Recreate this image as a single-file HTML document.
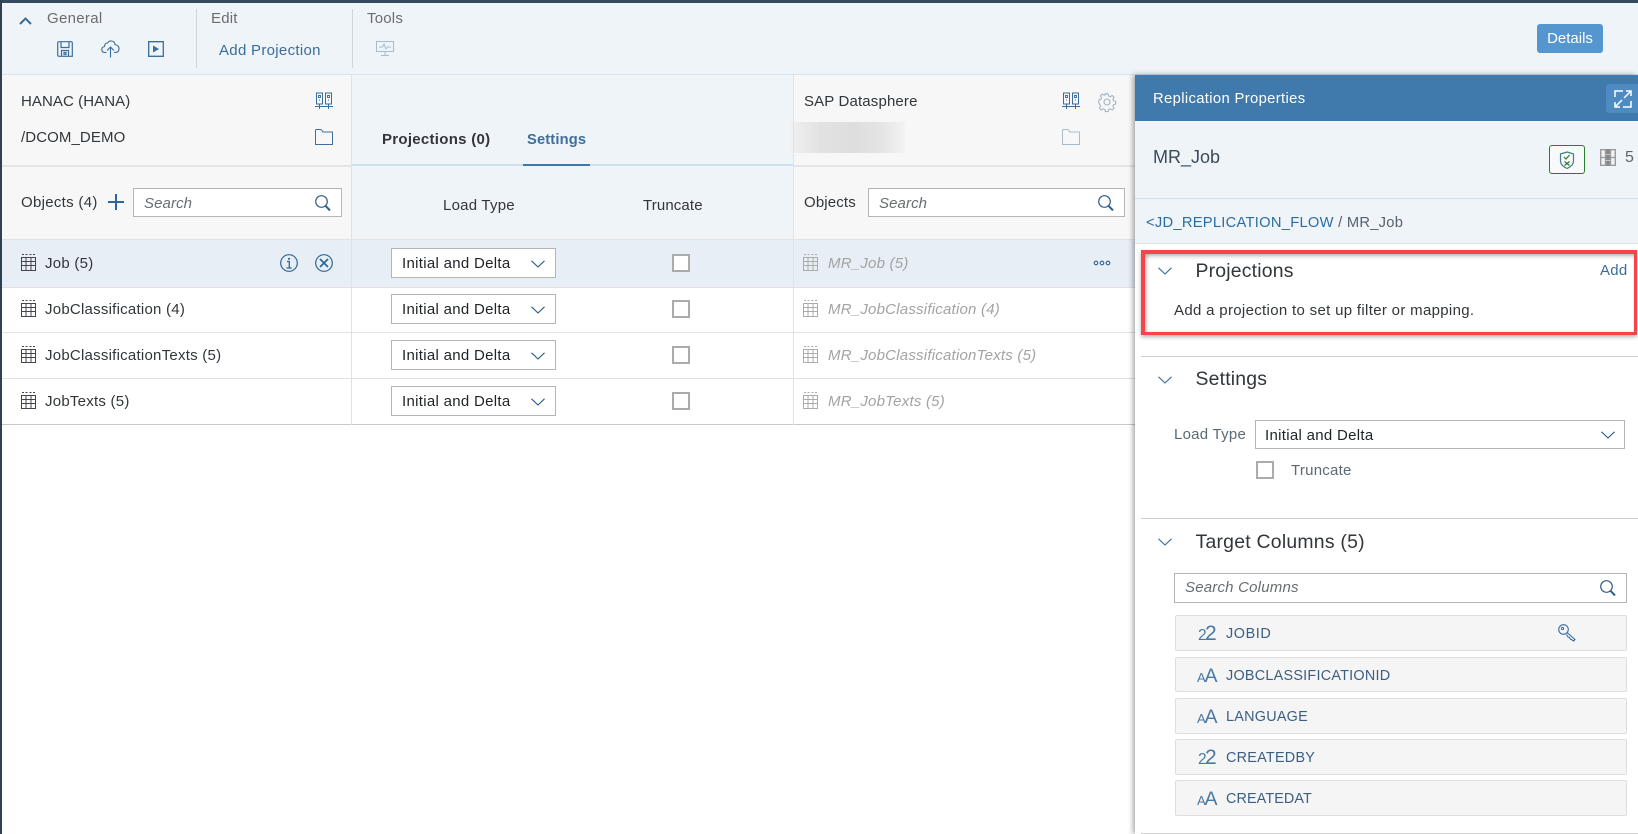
<!DOCTYPE html>
<html><head><meta charset="utf-8"><title>Replication Flow</title>
<style>
html,body{margin:0;padding:0;background:#fff}
#p{position:relative;width:1638px;height:834px;overflow:hidden;background:#fff;font-family:"Liberation Sans",sans-serif;font-size:15px;color:#32363a}
#p div,#p svg,#p span.t{position:absolute}
.t{white-space:nowrap;line-height:20px;height:20px;letter-spacing:.2px}
.b{border:1px solid #b5b5b5;background:#fff;box-sizing:border-box}
.cb{border:2px solid #ababab;background:#fff;box-sizing:border-box;width:18px;height:18px}
.hl{height:1px;background:#e2e2e2}
.g{color:#a3a3a3;font-style:italic;letter-spacing:.22px}
.ph{color:#6a6d70;font-style:italic;letter-spacing:.1px}
.li{left:1175px;width:452px;background:#f5f5f5;border:1px solid #dedede;border-radius:2px;box-sizing:border-box}
.lt{color:#3b5f83;font-size:14.4px;letter-spacing:.25px}
.h2{font-size:19.4px;color:#32363a;letter-spacing:.2px}
.sel{color:#1f2328;letter-spacing:.3px}
.ty{color:#4a78a2;line-height:26px;height:26px;letter-spacing:0}
svg{overflow:visible;fill:none}
</style></head><body><div id="p">
<svg width="0" height="0" style="position:absolute">
<defs>
<symbol id="tbl" viewBox="0 0 15 18"><path d="M.5 4.500h14v13H.5zM.5 8.500h14M.5 12.500h14M5 4.500v13M10 4.500v13M1 1.500h2M4.500 1.500h2M8.500 1.500h2M12 1.500h2" stroke="currentColor" fill="none"/></symbol>
<symbol id="conn" viewBox="0 0 18 18"><path d="M1.500 1h6v11h-6zM10.500 1h6v11h-6zM4.500 12v5M13.500 12v5M0 14.500h18" stroke="currentColor" fill="none"/><path d="M3.500 3.500h2v2h-2zM12.500 3.500h2v2h-2zM4 8h1M13 8h1" stroke="currentColor" fill="none" stroke-width=".9"/></symbol>
<symbol id="fold" viewBox="0 0 18 16"><path d="M.5 15.500V1.500q0-1 1-1h4q1 0 1.500 1l.7 1.500h9.800v12.500z" stroke="currentColor" fill="none"/></symbol>
<symbol id="srch" viewBox="0 0 16 16"><circle cx="6.500" cy="6.500" r="5.800" stroke="currentColor" fill="none" stroke-width="1.200"/><path d="M10.500 10.800l4.500 4.700" stroke="currentColor" stroke-width="2" fill="none"/></symbol>
<symbol id="chev" viewBox="0 0 14 8"><path d="M.5.800L7 7l6.500-6.200" stroke="currentColor" fill="none" stroke-width="1.100"/></symbol>
</defs></svg>

<!-- frame -->
<div style="left:0;top:0;width:1638px;height:3px;background:#354a5f"></div>
<div style="left:0;top:0;width:2px;height:834px;background:#2f4052"></div>

<!-- toolbar -->
<div style="left:2px;top:3px;width:1636px;height:71px;background:#eff4f9"></div>
<div style="left:2px;top:74px;width:1636px;height:1px;background:#d6e3f0"></div>
<svg style="left:19px;top:17px" width="13" height="8" viewBox="0 0 13 8"><path d="M1 7L6.500 1.500 12 7" stroke="#3b6c97" stroke-width="2"/></svg>
<span class="t" style="left:47px;top:9px;color:#6a6d70;letter-spacing:.3px">General</span>
<svg style="left:57px;top:41px" width="16" height="16" viewBox="0 0 16 16"><path d="M.7 2q0-1.300 1.300-1.300h12q1.300 0 1.300 1.300v13.300H2q-1.300 0-1.300-1.300zM4 1v5.500h8V1M4.500 15v-5.500h7V15M7 11.500h2v2H7z" stroke="#3a6d9b" stroke-width="1.200"/></svg>
<svg style="left:101px;top:40px" width="19" height="18" viewBox="0 0 19 18"><path d="M5.500 12.500H4Q.8 12.500.8 9.500 .8 7 3.500 6.500 3.800 3 6.500 3 8 .8 10.500 1 13.500 1.300 14 4.500 18.300 5.500 18 9.200 17.800 12.500 14 12.500h-1M9.500 17.500V7M6 10.500L9.500 7l3.500 3.500" stroke="#3a6d9b" stroke-width="1.100"/></svg>
<svg style="left:148px;top:41px" width="16" height="16" viewBox="0 0 16 16"><path d="M.7.700h14.600v14.600H.7z" stroke="#3a6d9b" stroke-width="1.300"/><path d="M5 4.500L11 8l-6 3.500z" fill="#3a6d9b"/></svg>
<div style="left:196px;top:9px;width:1px;height:59px;background:#cdd5dc"></div>
<span class="t" style="left:211px;top:9px;color:#6a6d70">Edit</span>
<span class="t" style="left:219px;top:41px;color:#3a6d9b;letter-spacing:.3px">Add Projection</span>
<div style="left:352px;top:9px;width:1px;height:59px;background:#cdd5dc"></div>
<span class="t" style="left:367px;top:9px;color:#6a6d70">Tools</span>
<svg style="left:376px;top:41px" width="18" height="15" viewBox="0 0 18 15"><path d="M.5.500h17v10H.5zM5 14.500h8M9 11v3" stroke="#a9bccd"/><path d="M3 6h3.500l1.500-3 2 5 1.500-2H15" stroke="#a9bccd"/></svg>
<div style="left:1537px;top:24px;width:66px;height:29px;background:#5496cd;border-radius:3px;color:#fff;text-align:center;line-height:30px">Details</div>

<!-- left col -->
<div style="left:2px;top:75px;width:349px;height:164px;background:#f7f7f7"></div>
<div style="left:2px;top:165px;width:349px;height:2px;background:#e5e5e5"></div>
<span class="t" style="left:21px;top:92px;letter-spacing:.08px">HANAC (HANA)</span>
<svg style="left:315px;top:92px;color:#3a6d9b" width="18" height="18"><use href="#conn"/></svg>
<span class="t" style="left:21px;top:128px;letter-spacing:.1px">/DCOM_DEMO</span>
<svg style="left:315px;top:129px;color:#3f6e98" width="18" height="16"><use href="#fold"/></svg>
<span class="t" style="left:21px;top:193px;letter-spacing:.3px">Objects (4)</span>
<div style="left:108px;top:201px;width:16px;height:2px;background:#2f6698"></div>
<div style="left:115px;top:194px;width:2px;height:16px;background:#2f6698"></div>
<div class="b" style="left:133px;top:188px;width:209px;height:29px"></div>
<span class="t ph" style="left:144px;top:194px">Search</span>
<svg style="left:315px;top:195px;color:#2f5f8c" width="16" height="16"><use href="#srch"/></svg>

<!-- middle head -->
<div style="left:352px;top:75px;width:441px;height:164px;background:#eff4f9"></div>
<div style="left:352px;top:164px;width:441px;height:2px;background:#d1e0ee"></div>
<div style="left:523px;top:164px;width:67px;height:2px;background:#3f78aa"></div>
<span class="t" style="left:382px;top:130px;font-weight:bold;font-size:15px;letter-spacing:.28px">Projections (0)</span>
<span class="t" style="left:527px;top:130px;font-weight:bold;font-size:14.700px;color:#3f6f9d;letter-spacing:.15px">Settings</span>
<span class="t" style="left:443px;top:196px;letter-spacing:.23px">Load Type</span>
<span class="t" style="left:643px;top:196px;letter-spacing:.13px">Truncate</span>

<!-- right col head -->
<div style="left:793px;top:75px;width:342px;height:164px;background:#f7f7f7"></div>
<div style="left:793px;top:165px;width:342px;height:2px;background:#e5e5e5"></div>
<span class="t" style="left:804px;top:92px;letter-spacing:.15px">SAP Datasphere</span>
<svg style="left:1062px;top:92px;color:#3a6d9b" width="18" height="18"><use href="#conn"/></svg>
<svg style="left:1098px;top:93px" width="18" height="18" viewBox="0 0 18 18"><path d="M7.500 1h3l.5 2.300 1.800.8 2-1.300 2 2-1.300 2 .8 1.800 2.200.4v3l-2.200.5-.8 1.800 1.300 2-2 2-2-1.300-1.800.8-.5 2.200h-3l-.5-2.200-1.800-.8-2 1.300-2-2 1.300-2-.8-1.800L.5 10.500v-3l2.200-.4.800-1.800-1.300-2 2-2 2 1.300 1.800-.8z" transform="scale(.94) translate(.3 -.2)" stroke="#9fb2c4" stroke-width="1.100"/><circle cx="9" cy="9" r="3" stroke="#9fb2c4" stroke-width="1.100"/></svg>
<div style="left:791px;top:122px;width:114px;height:31px;background:linear-gradient(90deg,#f0f0f0 0%,#e2e2e2 25%,#dedede 55%,#e4e4e4 78%,#f3f3f3 100%)"></div>
<svg style="left:1062px;top:129px;color:#a9bccd" width="18" height="16"><use href="#fold"/></svg>
<span class="t" style="left:804px;top:193px;letter-spacing:.15px">Objects</span>
<div class="b" style="left:868px;top:188px;width:257px;height:29px"></div>
<span class="t ph" style="left:879px;top:194px">Search</span>
<svg style="left:1098px;top:195px;color:#2f5f8c" width="16" height="16"><use href="#srch"/></svg>

<!-- rows -->
<div style="left:2px;top:239px;width:1133px;height:48px;background:#e7eef6"></div>
<div class="hl" style="left:2px;top:239px;width:1133px"></div>
<div class="hl" style="left:2px;top:287px;width:1133px"></div>
<div class="hl" style="left:2px;top:332px;width:1133px"></div>
<div class="hl" style="left:2px;top:378px;width:1133px"></div>
<div style="left:2px;top:424px;width:1133px;height:1px;background:#c8c8c8"></div>
<div style="left:351px;top:75px;width:1px;height:350px;background:#e2e2e2"></div>
<div style="left:793px;top:75px;width:1px;height:350px;background:#e2e2e2"></div>

<!-- row 1 -->
<svg style="left:21px;top:253px;color:#45434d" width="15" height="18"><use href="#tbl"/></svg>
<span class="t" style="left:45px;top:254px;letter-spacing:.25px">Job (5)</span>
<svg style="left:280px;top:254px" width="18" height="18" viewBox="0 0 18 18"><circle cx="9" cy="9" r="8.300" stroke="#2f6698" stroke-width="1.200"/><path d="M7 7.500h2.300V14M6.500 14h5.200" stroke="#2f6698" stroke-width="1.300"/><circle cx="9" cy="4.800" r="1.100" fill="#2f6698"/></svg>
<svg style="left:315px;top:254px" width="18" height="18" viewBox="0 0 18 18"><circle cx="9" cy="9" r="8.300" stroke="#2f6698" stroke-width="1.200"/><path d="M5 5l8 8M13 5l-8 8" stroke="#2f6698" stroke-width="1.700"/></svg>
<div class="b" style="left:391px;top:248px;width:165px;height:30px"></div>
<span class="t sel" style="left:402px;top:254px">Initial and Delta</span>
<svg style="left:531px;top:260px;color:#2c5c88" width="14" height="8"><use href="#chev"/></svg>
<div class="cb" style="left:672px;top:254px"></div>
<svg style="left:803px;top:253px;color:#ababab" width="15" height="18"><use href="#tbl"/></svg>
<span class="t g" style="left:828px;top:254px">MR_Job (5)</span>
<svg style="left:1093px;top:260px" width="18" height="6" viewBox="0 0 18 6"><g stroke="#2f5f8c" stroke-width="1.100"><circle cx="3" cy="3" r="1.800"/><circle cx="9" cy="3" r="1.800"/><circle cx="15" cy="3" r="1.800"/></g></svg>

<!-- row 2 -->
<svg style="left:21px;top:299px;color:#45434d" width="15" height="18"><use href="#tbl"/></svg>
<span class="t" style="left:45px;top:300px;letter-spacing:.24px">JobClassification (4)</span>
<div class="b" style="left:391px;top:294px;width:165px;height:30px"></div>
<span class="t sel" style="left:402px;top:300px">Initial and Delta</span>
<svg style="left:531px;top:306px;color:#2c5c88" width="14" height="8"><use href="#chev"/></svg>
<div class="cb" style="left:672px;top:300px"></div>
<svg style="left:803px;top:299px;color:#ababab" width="15" height="18"><use href="#tbl"/></svg>
<span class="t g" style="left:828px;top:300px">MR_JobClassification (4)</span>

<!-- row 3 -->
<svg style="left:21px;top:345px;color:#45434d" width="15" height="18"><use href="#tbl"/></svg>
<span class="t" style="left:45px;top:346px;letter-spacing:.24px">JobClassificationTexts (5)</span>
<div class="b" style="left:391px;top:340px;width:165px;height:30px"></div>
<span class="t sel" style="left:402px;top:346px">Initial and Delta</span>
<svg style="left:531px;top:352px;color:#2c5c88" width="14" height="8"><use href="#chev"/></svg>
<div class="cb" style="left:672px;top:346px"></div>
<svg style="left:803px;top:345px;color:#ababab" width="15" height="18"><use href="#tbl"/></svg>
<span class="t g" style="left:828px;top:346px">MR_JobClassificationTexts (5)</span>

<!-- row 4 -->
<svg style="left:21px;top:391px;color:#45434d" width="15" height="18"><use href="#tbl"/></svg>
<span class="t" style="left:45px;top:392px;letter-spacing:.24px">JobTexts (5)</span>
<div class="b" style="left:391px;top:386px;width:165px;height:30px"></div>
<span class="t sel" style="left:402px;top:392px">Initial and Delta</span>
<svg style="left:531px;top:398px;color:#2c5c88" width="14" height="8"><use href="#chev"/></svg>
<div class="cb" style="left:672px;top:392px"></div>
<svg style="left:803px;top:391px;color:#ababab" width="15" height="18"><use href="#tbl"/></svg>
<span class="t g" style="left:828px;top:392px">MR_JobTexts (5)</span>

<!-- right panel -->
<div style="left:1135px;top:75px;width:503px;height:759px;background:#fff;box-shadow:-2px 0 5px rgba(0,0,0,.35)"></div>
<div style="left:1135px;top:75px;width:503px;height:46px;background:#4079ab"></div>
<span class="t" style="left:1153px;top:89px;color:#fff;font-size:14.800px;letter-spacing:.35px">Replication Properties</span>
<div style="left:1606px;top:84px;width:32px;height:29px;background:#4d8bc2;border-radius:3px 0 0 3px"></div>
<svg style="left:1614px;top:90px" width="18" height="18" viewBox="0 0 18 18"><path d="M1 7V1h8M17 11v6H9M10 8l7-7M12 1h5v5M8 10l-7 7M1 12v5h5" stroke="#fff" stroke-width="1.500"/></svg>
<div style="left:1135px;top:121px;width:503px;height:122px;background:#eff4f9"></div>
<div style="left:1135px;top:198px;width:503px;height:1px;background:#d1e0ee"></div>
<div style="left:1135px;top:243px;width:503px;height:1px;background:#d8e3ee"></div>
<span class="t" style="left:1153px;top:147px;font-size:18px;color:#3c4b5a;letter-spacing:0">MR_Job</span>
<div style="left:1549px;top:145px;width:36px;height:29px;border:1px solid #2b7c2b;border-radius:3px;box-sizing:border-box;background:#f7f9fb"></div>
<svg style="left:1559px;top:151px" width="16" height="18" viewBox="0 0 16 18"><path d="M8 1L14.500 3v7q0 4.500-6.500 7.500Q1.500 14.500 1.500 10V3z" stroke="#3f7f90" stroke-width="1.200"/><path d="M5 6l2 2 3.500-4M5.500 10.500l5 4M10.500 10.500l-5 4" stroke="#2b7c2b" stroke-width="1.200"/></svg>
<svg style="left:1600px;top:149px" width="16" height="17" viewBox="0 0 16 17"><path d="M5.500 0h5v17h-5z" fill="#8a8a8a"/><path d="M.7.700h4.800v15.600H.7zM10.500.7h4.800v15.600h-4.800z" stroke="#9a9a9a" stroke-width="1.400"/><path d="M0 8.500h5.500M10.500 8.500H16" stroke="#9a9a9a" stroke-width="1.300"/><path d="M5.500 5.500h5M5.500 11.500h5" stroke="#d5d9de" stroke-width=".8"/></svg>
<span class="t" style="left:1625px;top:148px;font-size:16px;color:#5d6670;letter-spacing:0">5</span>
<span class="t" style="left:1146px;top:213px;font-size:14.700px;color:#2b6da3;letter-spacing:.28px">&lt;JD_REPLICATION_FLOW <span style="color:#56626e">/ MR_Job</span></span>

<!-- projections -->
<div style="left:1141px;top:250px;width:496px;height:85px;box-sizing:border-box;border:solid #f5444a;border-width:4px 3px 3px 4px;box-shadow:0 2px 4px rgba(0,0,0,.3),inset 0 4px 4px -2px rgba(0,0,0,.28),inset 3px 0 3px -1px rgba(0,0,0,.2)"></div>
<svg style="left:1158px;top:267px;color:#3a6d9b" width="14" height="8"><use href="#chev"/></svg>
<span class="t h2" style="left:1195.500px;top:261px">Projections</span>
<span class="t" style="left:1600px;top:261px;color:#3a6d9b;letter-spacing:.25px">Add</span>
<span class="t" style="left:1174px;top:301px;letter-spacing:.32px">Add a projection to set up filter or mapping.</span>

<!-- settings -->
<div style="left:1141px;top:356px;width:497px;height:1px;background:#cfcfcf"></div>
<svg style="left:1158px;top:376px;color:#3a6d9b" width="14" height="8"><use href="#chev"/></svg>
<span class="t h2" style="left:1195.500px;top:369px">Settings</span>
<span class="t" style="left:1174px;top:425px;color:#5a6a75;letter-spacing:.25px">Load Type</span>
<div class="b" style="left:1255px;top:420px;width:370px;height:29px"></div>
<span class="t sel" style="left:1265px;top:426px">Initial and Delta</span>
<svg style="left:1601px;top:431px;color:#2c5c88" width="14" height="8"><use href="#chev"/></svg>
<div class="cb" style="left:1256px;top:461px"></div>
<span class="t" style="left:1291px;top:461px;color:#5a6a75;letter-spacing:.25px">Truncate</span>

<!-- target columns -->
<div style="left:1141px;top:518px;width:497px;height:1px;background:#cfcfcf"></div>
<svg style="left:1158px;top:538px;color:#3a6d9b" width="14" height="8"><use href="#chev"/></svg>
<span class="t h2" style="left:1195.500px;top:532px;letter-spacing:.25px">Target Columns (5)</span>
<div class="b" style="left:1174px;top:573px;width:453px;height:30px"></div>
<span class="t ph" style="left:1185px;top:578px;letter-spacing:.2px">Search Columns</span>
<svg style="left:1600px;top:580px;color:#2f5f8c" width="16" height="16"><use href="#srch"/></svg>

<div class="li" style="top:615px;height:36px"></div>
<span class="t ty" style="left:1198px;top:623px;font-size:15.500px">2</span><span class="t ty" style="left:1205px;top:621px;font-size:21px">2</span>
<span class="t lt" style="left:1226px;top:624px;letter-spacing:.6px">JOBID</span>
<svg style="left:1558px;top:624px" width="19" height="18" viewBox="0 0 19 18"><circle cx="5.500" cy="5.500" r="4.800" stroke="#3a6d9b" stroke-width="1.100"/><circle cx="4.500" cy="4.500" r="1.100" stroke="#3a6d9b"/><path d="M9 8.500l8 7-1.500 1.500-2-1.500-1-.1-1-1.900-1.500-.5-1.500-2.500" stroke="#3a6d9b" stroke-width="1.100"/></svg>

<div class="li" style="top:657px;height:35px"></div>
<span class="t ty" style="left:1197px;top:665px;font-size:13px">A</span><span class="t ty" style="left:1204.500px;top:663px;font-size:19.500px">A</span>
<span class="t lt" style="left:1226px;top:666px">JOBCLASSIFICATIONID</span>

<div class="li" style="top:698px;height:36px"></div>
<span class="t ty" style="left:1197px;top:706px;font-size:13px">A</span><span class="t ty" style="left:1204.500px;top:704px;font-size:19.500px">A</span>
<span class="t lt" style="left:1226px;top:707px">LANGUAGE</span>

<div class="li" style="top:739px;height:36px"></div>
<span class="t ty" style="left:1198px;top:747px;font-size:15.500px">2</span><span class="t ty" style="left:1205px;top:745px;font-size:21px">2</span>
<span class="t lt" style="left:1226px;top:748px">CREATEDBY</span>

<div class="li" style="top:780px;height:36px"></div>
<span class="t ty" style="left:1197px;top:788px;font-size:13px">A</span><span class="t ty" style="left:1204.500px;top:786px;font-size:19.500px">A</span>
<span class="t lt" style="left:1226px;top:789px;letter-spacing:.1px">CREATEDAT</span>

<div style="left:1141px;top:833px;width:497px;height:1px;background:#cfcfcf"></div>
</div></body></html>
